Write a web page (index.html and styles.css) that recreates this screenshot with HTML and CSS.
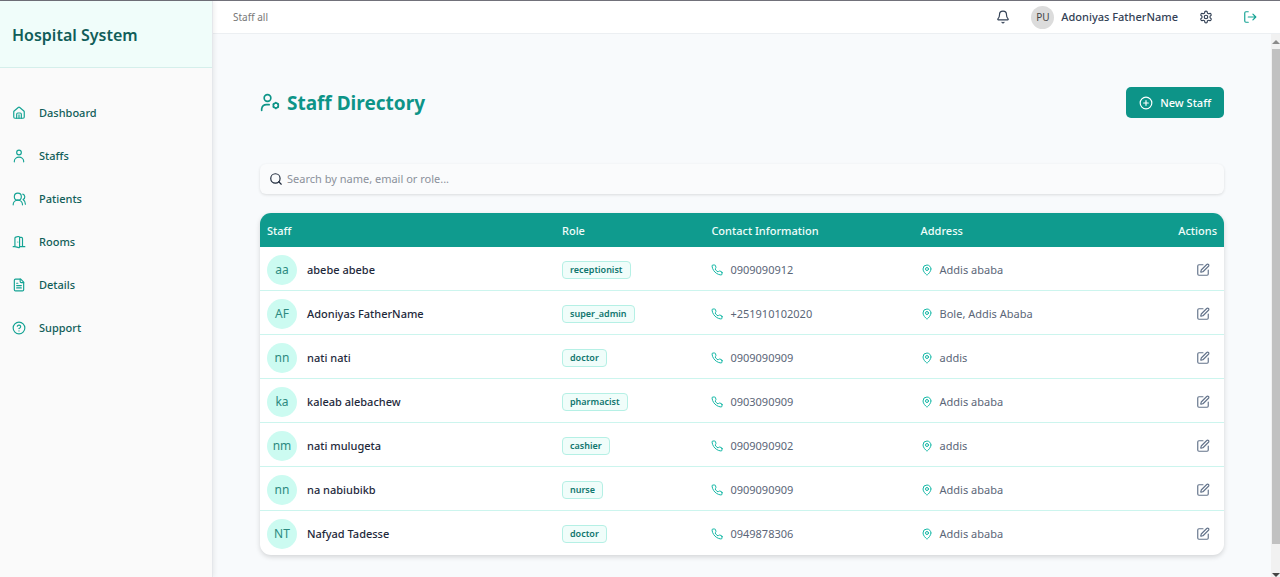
FILE: index.html
```
<!DOCTYPE html>
<html lang="en">
<head>
    <meta charset="UTF-8">
    <meta name="viewport" content="width=device-width, initial-scale=1.0">
    <title>Hospital System</title>
    <link rel="stylesheet" href="styles.css">
</head>
<body>
    <!-- Icon set -->
    <svg class="sprite" aria-hidden="true">
        <symbol id="home" viewBox="0 0 24 24"><path d="M3 10a2 2 0 0 1 .7-1.500l7-6a2 2 0 0 1 2.600 0l7 6a2 2 0 0 1 .7 1.500v9a2 2 0 0 1-2 2H5a2 2 0 0 1-2-2z"/><path d="M8 21v-7a2 2 0 0 1 2-2h4a2 2 0 0 1 2 2v7M12 15v6"/></symbol>
        <symbol id="user" viewBox="0 0 24 24"><circle cx="12" cy="6" r="4"/><path d="M4 22v-1a8 7 0 0 1 16 0v1"/></symbol>
        <symbol id="users" viewBox="0 0 24 24"><circle cx="10" cy="8" r="6"/><path d="M18 22a8 8 0 0 0-16 0M23 21c0-3.370-2-6.500-4-8a5 5 0 0 0-.45-9.300"/></symbol>
        <symbol id="door" viewBox="0 0 24 24"><path d="M13 4h3a2 2 0 0 1 2 2v14M2 20h3M13 20h9M10 12v.01M13 4.560v16.160a1 1 0 0 1-1.240.97L5 20V5.560a2 2 0 0 1 1.520-1.940l4-1A2 2 0 0 1 13 4.560z"/></symbol>
        <symbol id="file" viewBox="0 0 24 24"><path d="M15 2H6a2 2 0 0 0-2 2v16a2 2 0 0 0 2 2h12a2 2 0 0 0 2-2V7z"/><path d="M14 2v4a2 2 0 0 0 2 2h4M10 9H8M16 13H8M16 17H8"/></symbol>
        <symbol id="help" viewBox="0 0 24 24"><circle cx="12" cy="12" r="10"/><path d="M9.090 9a3 3 0 0 1 5.830 1c0 2-3 3-3 3M12 17h.01"/></symbol>
        <symbol id="bell" viewBox="0 0 24 24"><path d="M10.300 21a1.940 1.940 0 0 0 3.400 0M6 8a6 6 0 0 1 12 0c0 4.500 1.400 6 2.700 7.300a1 1 0 0 1-.7 1.700H4a1 1 0 0 1-.7-1.700C4.600 14 6 12.500 6 8"/></symbol>
        <symbol id="gear" viewBox="0 0 24 24"><path d="M12.200 2h-.4a2 2 0 0 0-2 2v.2a2 2 0 0 1-1 1.700l-.4.3a2 2 0 0 1-2 0l-.2-.1a2 2 0 0 0-2.700.7l-.2.4a2 2 0 0 0 .7 2.700l.2.1a2 2 0 0 1 1 1.700v.5a2 2 0 0 1-1 1.800l-.2.1a2 2 0 0 0-.7 2.700l.2.400a2 2 0 0 0 2.700.7l.2-.1a2 2 0 0 1 2 0l.4.300a2 2 0 0 1 1 1.700v.2a2 2 0 0 0 2 2h.4a2 2 0 0 0 2-2v-.2a2 2 0 0 1 1-1.700l.4-.3a2 2 0 0 1 2 0l.2.1a2 2 0 0 0 2.700-.7l.2-.4a2 2 0 0 0-.7-2.700l-.2-.1a2 2 0 0 1-1-1.700v-.5a2 2 0 0 1 1-1.800l.2-.1a2 2 0 0 0 .7-2.700l-.2-.4a2 2 0 0 0-2.700-.7l-.2.1a2 2 0 0 1-2 0l-.4-.3a2 2 0 0 1-1-1.700V4a2 2 0 0 0-2-2z"/><circle cx="12" cy="12" r="3"/></symbol>
        <symbol id="logout" viewBox="0 0 24 24"><path d="M9 3H5a2 2 0 0 0-2 2v14a2 2 0 0 0 2 2h4M9 12h13M17 7l5 5-5 5"/></symbol>
        <symbol id="user-cog" viewBox="0 0 24 24"><circle cx="9" cy="6" r="4"/><path d="M2 21v-2a6 6 0 0 1 6-5h3"/><circle cx="19" cy="15" r="3"/><path d="M19 11.500v.5M19 18v.5M16 13.300l.4.200M21.600 16.500l.4.200M16 16.700l.4-.2M21.600 13.500l.4-.2"/></symbol>
        <symbol id="plus" viewBox="0 0 24 24"><circle cx="12" cy="12" r="10"/><path d="M8 12h8M12 8v8"/></symbol>
        <symbol id="search" viewBox="0 0 24 24"><circle cx="11" cy="11" r="8"/><path d="M21 21l-4.300-4.300"/></symbol>
        <symbol id="phone" viewBox="0 0 24 24"><path d="M22 16.920v3a2 2 0 0 1-2.180 2 19.790 19.790 0 0 1-8.630-3.070 19.500 19.500 0 0 1-6-6 19.790 19.790 0 0 1-3.070-8.670A2 2 0 0 1 4.110 2h3a2 2 0 0 1 2 1.720c.13.960.36 1.900.7 2.810a2 2 0 0 1-.45 2.110L8.090 9.910a16 16 0 0 0 6 6l1.270-1.270a2 2 0 0 1 2.110-.45c.91.340 1.850.570 2.810.7A2 2 0 0 1 22 16.920z"/></symbol>
        <symbol id="pin" viewBox="0 0 24 24"><path d="M20 10c0 5-5.500 10.200-7.400 11.800a1 1 0 0 1-1.200 0C9.500 20.200 4 15 4 10a8 8 0 0 1 16 0"/><circle cx="12" cy="10" r="3"/></symbol>
        <symbol id="edit" viewBox="0 0 24 24"><path d="M12 3H5a2 2 0 0 0-2 2v14a2 2 0 0 0 2 2h14a2 2 0 0 0 2-2v-7"/><path d="M18.400 2.600a2.120 2.120 0 0 1 3 3L12.400 14.600a2 2 0 0 1-.9.5l-2.800.8a.5.5 0 0 1-.6-.6l.8-2.800a2 2 0 0 1 .5-.9z"/></symbol>
    </svg>

    <div class="app">
        <aside class="sidebar">
            <div class="brand">Hospital System</div>
            <nav class="menu">
                <a href="#"><svg class="icon"><use href="#home"/></svg>Dashboard</a>
                <a href="#"><svg class="icon"><use href="#user"/></svg>Staffs</a>
                <a href="#"><svg class="icon"><use href="#users"/></svg>Patients</a>
                <a href="#"><svg class="icon"><use href="#door"/></svg>Rooms</a>
                <a href="#"><svg class="icon"><use href="#file"/></svg>Details</a>
                <a href="#"><svg class="icon"><use href="#help"/></svg>Support</a>
            </nav>
        </aside>

        <div class="main">
            <header class="topbar">
                <span class="breadcrumb">Staff all</span>
                <button class="icon-btn" aria-label="Notifications"><svg class="icon"><use href="#bell"/></svg></button>
                <div class="profile">
                    <span class="avatar avatar-grey">PU</span>
                    <span class="profile-name">Adoniyas FatherName</span>
                </div>
                <button class="icon-btn" aria-label="Settings"><svg class="icon"><use href="#gear"/></svg></button>
                <button class="icon-btn logout" aria-label="Log out"><svg class="icon"><use href="#logout"/></svg></button>
            </header>

            <div class="body">
                <main class="content">
                    <div class="page-head">
                        <h1><svg class="icon icon-lg"><use href="#user-cog"/></svg>Staff Directory</h1>
                        <button class="btn-primary"><svg class="icon"><use href="#plus"/></svg>New Staff</button>
                    </div>

                    <label class="search">
                        <svg class="icon"><use href="#search"/></svg>
                        <input type="text" placeholder="Search by name, email or role..." aria-label="Search staff">
                    </label>

                    <table class="staff-table">
                        <thead>
                            <tr>
                                <th class="col-staff">Staff</th>
                                <th class="col-role">Role</th>
                                <th class="col-contact">Contact Information</th>
                                <th>Address</th>
                                <th class="col-actions">Actions</th>
                            </tr>
                        </thead>
                        <tbody>
                            <tr>
                                <td><div class="person"><span class="avatar">aa</span>abebe abebe</div></td>
                                <td><span class="tag">receptionist</span></td>
                                <td><div class="info"><svg class="icon"><use href="#phone"/></svg>0909090912</div></td>
                                <td><div class="info"><svg class="icon"><use href="#pin"/></svg>Addis ababa</div></td>
                                <td class="col-actions"><button class="edit" aria-label="Edit"><svg class="icon"><use href="#edit"/></svg></button></td>
                            </tr>
                            <tr>
                                <td><div class="person"><span class="avatar">AF</span>Adoniyas FatherName</div></td>
                                <td><span class="tag">super_admin</span></td>
                                <td><div class="info"><svg class="icon"><use href="#phone"/></svg>+251910102020</div></td>
                                <td><div class="info"><svg class="icon"><use href="#pin"/></svg>Bole, Addis Ababa</div></td>
                                <td class="col-actions"><button class="edit" aria-label="Edit"><svg class="icon"><use href="#edit"/></svg></button></td>
                            </tr>
                            <tr>
                                <td><div class="person"><span class="avatar">nn</span>nati nati</div></td>
                                <td><span class="tag">doctor</span></td>
                                <td><div class="info"><svg class="icon"><use href="#phone"/></svg>0909090909</div></td>
                                <td><div class="info"><svg class="icon"><use href="#pin"/></svg>addis</div></td>
                                <td class="col-actions"><button class="edit" aria-label="Edit"><svg class="icon"><use href="#edit"/></svg></button></td>
                            </tr>
                            <tr>
                                <td><div class="person"><span class="avatar">ka</span>kaleab alebachew</div></td>
                                <td><span class="tag">pharmacist</span></td>
                                <td><div class="info"><svg class="icon"><use href="#phone"/></svg>0903090909</div></td>
                                <td><div class="info"><svg class="icon"><use href="#pin"/></svg>Addis ababa</div></td>
                                <td class="col-actions"><button class="edit" aria-label="Edit"><svg class="icon"><use href="#edit"/></svg></button></td>
                            </tr>
                            <tr>
                                <td><div class="person"><span class="avatar">nm</span>nati mulugeta</div></td>
                                <td><span class="tag">cashier</span></td>
                                <td><div class="info"><svg class="icon"><use href="#phone"/></svg>0909090902</div></td>
                                <td><div class="info"><svg class="icon"><use href="#pin"/></svg>addis</div></td>
                                <td class="col-actions"><button class="edit" aria-label="Edit"><svg class="icon"><use href="#edit"/></svg></button></td>
                            </tr>
                            <tr>
                                <td><div class="person"><span class="avatar">nn</span>na nabiubikb</div></td>
                                <td><span class="tag">nurse</span></td>
                                <td><div class="info"><svg class="icon"><use href="#phone"/></svg>0909090909</div></td>
                                <td><div class="info"><svg class="icon"><use href="#pin"/></svg>Addis ababa</div></td>
                                <td class="col-actions"><button class="edit" aria-label="Edit"><svg class="icon"><use href="#edit"/></svg></button></td>
                            </tr>
                            <tr>
                                <td><div class="person"><span class="avatar">NT</span>Nafyad Tadesse</div></td>
                                <td><span class="tag">doctor</span></td>
                                <td><div class="info"><svg class="icon"><use href="#phone"/></svg>0949878306</div></td>
                                <td><div class="info"><svg class="icon"><use href="#pin"/></svg>Addis ababa</div></td>
                                <td class="col-actions"><button class="edit" aria-label="Edit"><svg class="icon"><use href="#edit"/></svg></button></td>
                            </tr>
                        </tbody>
                    </table>
                </main>

                <div class="scrollbar" aria-hidden="true">
                    <svg class="arrow" viewBox="0 0 8 4"><path d="M0 4l4-4 4 4z"/></svg>
                    <div class="thumb"></div>
                    <svg class="arrow arrow-down" viewBox="0 0 8 4"><path d="M0 0l4 4 4-4z"/></svg>
                </div>
            </div>
        </div>
    </div>
</body>
</html>
```
FILE: styles.css
```
* {
    box-sizing: border-box;
}
body {
    margin: 0;
    font-family: "Noto Sans", "Open Sans", sans-serif;
    font-size: 11px;
    line-height: 16px;
    color: #1e293b;
    background-color: #f8fafc;
}
button {
    font: inherit;
    border: none;
    background: none;
    padding: 0;
    cursor: pointer;
}
.sprite {
    display: none;
}
.icon {
    width: 14px;
    height: 14px;
    flex-shrink: 0;
    display: block;
    fill: none;
    stroke: currentColor;
    stroke-width: 2;
    stroke-linecap: round;
    stroke-linejoin: round;
}
.app {
    display: flex;
    min-height: 100vh;
    border-top: 1px solid #71717a;
}

/* Sidebar */
.sidebar {
    width: 213px;
    flex-shrink: 0;
    background-color: #fafafa;
    border-right: 1px solid #e5e7eb;
    box-shadow: 1px 0 5px rgba(0,0,0,0.08);
    z-index: 1;
}
.brand {
    padding: 23px 12px 21px;
    font-size: 16px;
    line-height: 22px;
    font-weight: 600;
    color: #115e59;
    background-color: #f0fdfa;
    border-bottom: 1px solid #d5efeb;
}
.menu {
    padding-top: 23px;
}
.menu a {
    display: flex;
    align-items: center;
    gap: 13px;
    padding: 14px 12px 13px;
    font-weight: 500;
    color: #115e59;
    text-decoration: none;
}
.menu .icon {
    color: #14a394;
}

/* Top bar */
.main {
    flex: 1;
    min-width: 0;
    display: flex;
    flex-direction: column;
}
.topbar {
    display: flex;
    align-items: center;
    height: 33px;
    padding: 0 23px 0 20px;
    background-color: #fff;
    border-bottom: 1px solid #eceff2;
}
.breadcrumb {
    flex: 1;
    font-size: 10px;
    color: #777;
}
.icon-btn {
    color: #334155;
}
.logout {
    margin-left: 30px;
    color: #14a394;
}
.profile {
    display: flex;
    align-items: center;
    gap: 7px;
    margin: 0 21px;
    font-weight: 500;
    color: #334155;
}
.avatar {
    display: flex;
    align-items: center;
    justify-content: center;
    width: 30px;
    height: 30px;
    border-radius: 50%;
    font-size: 12px;
    font-weight: 400;
    color: #2c8a80;
    background-color: #ccfbf1;
}
.avatar-grey {
    width: 23px;
    height: 23px;
    font-size: 10px;
    color: #444;
    background-color: #dcdcdc;
}

/* Page */
.body {
    flex: 1;
    display: flex;
}
.content {
    flex: 1;
    min-width: 0;
    padding: 53px 47px 21px;
}
.page-head {
    display: flex;
    align-items: center;
    justify-content: space-between;
    margin-bottom: 46px;
}
h1 {
    display: flex;
    align-items: center;
    gap: 7px;
    margin: 0;
    font-size: 19px;
    line-height: 28px;
    font-weight: 700;
    color: #0d9488;
}
.icon-lg {
    width: 20px;
    height: 20px;
}
.btn-primary {
    display: flex;
    align-items: center;
    gap: 7px;
    height: 31px;
    padding: 0 13px;
    border-radius: 5px;
    font-weight: 500;
    color: #fff;
    background-color: #0d9488;
}
.search {
    display: flex;
    align-items: center;
    gap: 4px;
    height: 30px;
    padding: 0 9px;
    margin-bottom: 19px;
    border-radius: 6px;
    background-color: #fafbfc;
    box-shadow: 0 1px 3px rgba(0,0,0,0.12);
}
.search input {
    flex: 1;
    padding: 0;
    border: none;
    outline: none;
    font: inherit;
    background: none;
}
.search input::placeholder {
    color: #8b919b;
}

/* Staff table */
.staff-table {
    width: 100%;
    table-layout: fixed;
    border-collapse: separate;
    border-spacing: 0;
    border-radius: 11px;
    overflow: hidden;
    background-color: #fff;
    box-shadow: 0 2px 5px rgba(0,0,0,0.15);
}
th {
    height: 34px;
    padding: 1px 7px 0;
    text-align: left;
    font-weight: 500;
    color: #f0fdfa;
    background-color: #0f9b8e;
}
td {
    height: 44px;
    padding: 2px 7px 0;
    color: #5b6678;
    border-bottom: 1px solid #ccf5ee;
}
tr:last-child td {
    border-bottom: none;
}
.col-staff {
    width: 30.6%;
}
.col-role {
    width: 15.5%;
}
.col-contact {
    width: 21.7%;
}
.col-actions {
    text-align: right;
}
.person {
    display: flex;
    align-items: center;
    gap: 10px;
    font-weight: 500;
    color: #1e293b;
}
.tag {
    display: inline-block;
    padding: 0 7px;
    border: 1px solid #b5f0e5;
    border-radius: 4px;
    font-size: 9px;
    font-weight: 600;
    color: #0f766e;
    background-color: #f0fdfa;
}
.info {
    display: flex;
    align-items: center;
    gap: 7px;
}
.info .icon {
    width: 12px;
    height: 12px;
    color: #14b8a6;
}
.edit {
    padding: 7px;
    color: #64748b;
    vertical-align: middle;
}

/* Scrollbar */
.scrollbar {
    display: flex;
    flex-direction: column;
    align-items: center;
    width: 9px;
    padding-left: 1px;
    overflow: hidden;
    background-color: #f1f1f1;
}
.arrow {
    width: 8px;
    height: 4px;
    margin: 6px 0 5px;
    flex-shrink: 0;
    fill: #8a8a8a;
}
.arrow-down {
    margin: 29px 0 0;
    fill: #444;
}
.thumb {
    flex: 1;
    width: 100%;
    background-color: #c1c1c1;
}
```
